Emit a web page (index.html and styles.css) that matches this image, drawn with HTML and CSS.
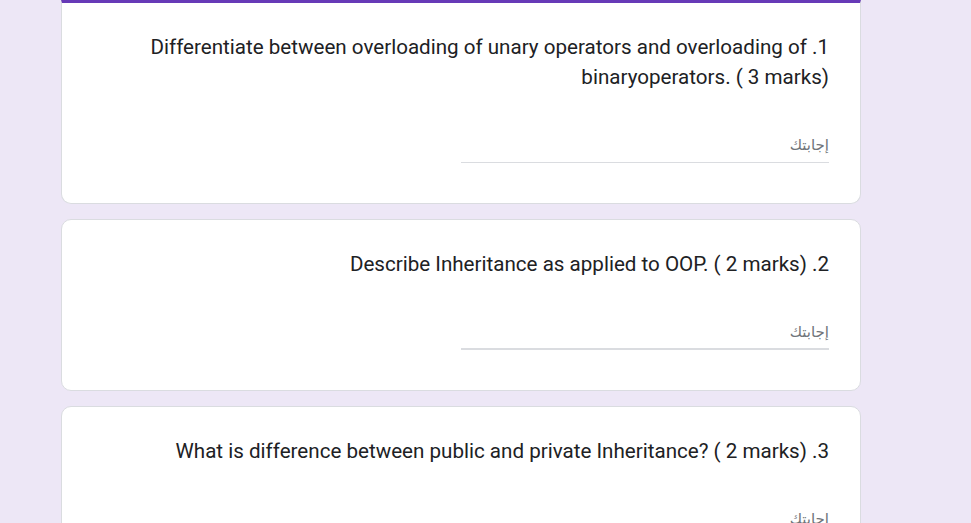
FILE: index.html
```html
<!DOCTYPE html>
<html dir="rtl">
<head>
<meta name="viewport" content="width=device-width, initial-scale=1">
<link rel="stylesheet" href="styles.css">
</head>
<body>

<div class="form">
  <div class="card card-first">
    <div class="title">Differentiate between overloading of unary operators and overloading of .1<br>binaryoperators. ( 3 marks)</div>
    <div class="answer"><span class="placeholder">إجابتك</span></div>
  </div>

  <div class="card">
    <div class="title">Describe Inheritance as applied to OOP. ( 2 marks) .2</div>
    <div class="answer answer-active"><span class="placeholder">إجابتك</span></div>
  </div>

  <div class="card">
    <div class="title">What is difference between public and private Inheritance? ( 2 marks) .3</div>
    <div class="answer"><span class="placeholder">إجابتك</span></div>
  </div>
</div>

</body>
</html>
```

FILE: styles.css
```css
body {
  margin: 0;
  background: #ede7f6;
  font-family: 'Roboto', 'Liberation Sans', sans-serif;
  overflow: hidden;
}

.form {
  width: 800px;
  margin-right: 110px;
  display: flex;
  flex-direction: column;
  gap: 15px;
}

.card {
  background: #fff;
  border: 1px solid #dadce0;
  border-radius: 10px;
  padding: 29px 31px 29px 30px;
}

.card-first {
  border-top: 3px solid #673ab7;
  border-radius: 0 0 10px 10px;
}

.title {
  direction: ltr;
  text-align: right;
  font-size: 20.6px;
  line-height: 30px;
  color: #202124;
}

.answer {
  width: 50%;
  margin-top: 43px;
  margin-bottom: 11px;
  padding-bottom: 7px;
  border-bottom: 1px solid #dadce0;
  line-height: 20px;
}

.answer-active {
  border-bottom: 2px solid #dadce0;
  padding-bottom: 6px;
}

.placeholder {
  font-family: 'DejaVu Sans', sans-serif;
  font-size: 15px;
  color: #70757a;
}
```
